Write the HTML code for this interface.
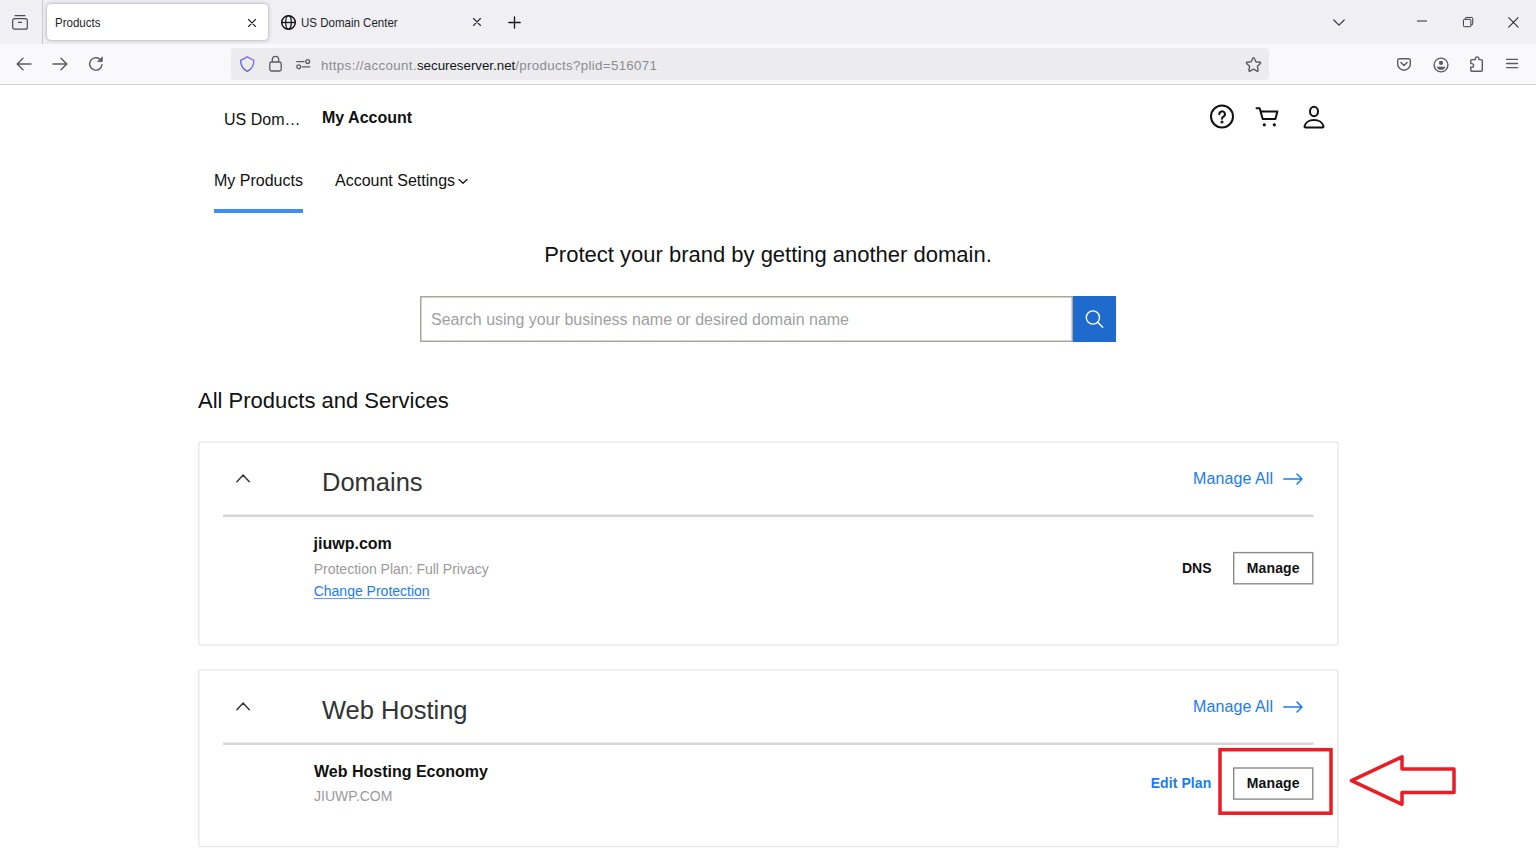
<!DOCTYPE html>
<html lang="en">
<head>
<meta charset="utf-8">
<title>Products</title>
<style>
*{box-sizing:border-box;margin:0;padding:0}
html,body{width:1536px;height:864px;overflow:hidden;background:#fff}
body{position:relative;font-family:"Liberation Sans",Arial,sans-serif;color:#111}
.abs{position:absolute}
.t{position:absolute;white-space:nowrap;line-height:1}
/* browser chrome */
#tabbar{left:0;top:0;width:1536px;height:44px;background:#f0f0f4}
#navbar{left:0;top:44px;width:1536px;height:41px;background:#f9f9fb;border-bottom:1px solid #cfcfd4}
#tab1{left:47px;top:4px;width:221px;height:36px;background:#fff;border-radius:4px;box-shadow:0 0 4px rgba(0,0,0,.28),0 0 1px rgba(0,0,0,.25)}
#sep{left:42px;top:0;width:1px;height:44px;background:#c9c9cf}
#urlbar{left:231px;top:48px;width:1038px;height:32px;background:#ececee;border-radius:4px}
.chrome{font-family:"Liberation Sans","DejaVu Sans",sans-serif;font-size:12.600px;color:#24232b;transform:scaleX(0.915);transform-origin:0 0}
svg{position:absolute;overflow:visible}
/* page */
.btn{position:absolute;width:80.500px;height:33px;font-weight:bold;font-size:14px;text-align:center;line-height:33px;color:#111;letter-spacing:0.120px}
.blue{color:#1a7cf5}
.gray{color:#767676}
</style>
</head>
<body>
<!-- ===== Browser chrome ===== -->
<div id="tabbar" class="abs"></div>
<div id="navbar" class="abs"></div>
<div id="sep" class="abs"></div>
<div id="tab1" class="abs"></div>
<div id="urlbar" class="abs"></div>

<!-- firefox view icon -->
<svg style="left:12px;top:14px" width="16" height="16" viewBox="0 0 16 16" fill="none" stroke="#4a4a55" stroke-width="1.2" stroke-linecap="round" stroke-linejoin="round">
<path d="M3 1.6h10"/><rect x="0.7" y="4.6" width="14.6" height="10.6" rx="2"/><path d="M6.4 8.4h3.2"/>
</svg>
<div class="t chrome" style="left:55px;top:17px">Products</div>
<svg style="left:247.500px;top:18.500px" width="8" height="8" viewBox="0 0 8 8" stroke="#2b2a33" stroke-width="1.100" stroke-linecap="round"><path d="M0.500 0.500l7 7M7.500 0.500l-7 7"/></svg>
<!-- globe -->
<svg style="left:281px;top:15.300px" width="15" height="15" viewBox="0 0 15 15" fill="none" stroke="#15141a" stroke-width="1.500"><circle cx="7.500" cy="7.500" r="6.800"/><ellipse cx="7.500" cy="7.500" rx="2.800" ry="6.800" stroke-width="1.300"/><path d="M0.800 7.500h13.400" stroke-width="1.300"/></svg>
<div class="t chrome" style="left:301px;top:17px">US Domain Center</div>
<svg style="left:473px;top:18px" width="8" height="8" viewBox="0 0 8 8" stroke="#2b2a33" stroke-width="1.100" stroke-linecap="round"><path d="M0.500 0.500l7 7M7.500 0.500l-7 7"/></svg>
<svg style="left:508px;top:16px" width="13" height="13" viewBox="0 0 13 13" stroke="#15141a" stroke-width="1.3" stroke-linecap="round"><path d="M6.5 0.8v11.4M0.8 6.5h11.4"/></svg>
<!-- window controls -->
<svg style="left:1333.400px;top:18.800px" width="12" height="8" viewBox="0 0 12 8" fill="none" stroke="#3a3944" stroke-width="1.200" stroke-linecap="round" stroke-linejoin="round"><path d="M0.8 1l5.2 5.2L11.2 1"/></svg>
<svg style="left:1417px;top:20.300px" width="10" height="2" viewBox="0 0 10 2" stroke="#2b2a33" stroke-width="1"><path d="M0 1h10"/></svg>
<svg style="left:1463px;top:16.800px" width="10.200" height="10.200" viewBox="0 0 11 11" fill="none" stroke="#2b2a33" stroke-width="1"><rect x="0.5" y="2.5" width="8" height="8" rx="1"/><path d="M2.5 2.5v-1a1 1 0 0 1 1-1h6a1 1 0 0 1 1 1v6a1 1 0 0 1-1 1h-1"/></svg>
<svg style="left:1507.600px;top:16.800px" width="10.800" height="10.800" viewBox="0 0 12 12" stroke="#2b2a33" stroke-width="1.200" stroke-linecap="round"><path d="M0.8 0.8l10.4 10.4M11.2 0.8L0.8 11.2"/></svg>

<!-- nav buttons -->
<svg style="left:16px;top:57px" width="16" height="14" viewBox="0 0 16 14" fill="none" stroke="#5b5b66" stroke-width="1.4" stroke-linecap="round" stroke-linejoin="round"><path d="M15 7H1.5M7 1.2L1.2 7 7 12.8"/></svg>
<svg style="left:52px;top:57px" width="16" height="14" viewBox="0 0 16 14" fill="none" stroke="#5b5b66" stroke-width="1.4" stroke-linecap="round" stroke-linejoin="round"><path d="M1 7h13.5M9 1.2L14.8 7 9 12.8"/></svg>
<svg style="left:88px;top:56px" width="16" height="16" viewBox="0 0 16 16" fill="none" stroke="#5b5b66" stroke-width="1.4" stroke-linecap="round" stroke-linejoin="round"><path d="M14 8.6A6.2 6.2 0 1 1 11.6 3"/><path d="M14.3 1.2v4.4H9.9z" fill="#5b5b66" stroke-width="0.8"/></svg>
<!-- url bar icons -->
<svg style="left:240px;top:56px" width="15" height="16" viewBox="0 0 15 16" fill="none" stroke-width="1.4" stroke-linejoin="round"><defs><linearGradient id="sg" x1="1" y1="0" x2="0" y2="1"><stop offset="0" stop-color="#a070fa"/><stop offset="1" stop-color="#2f62dc"/></linearGradient></defs><path d="M7.300 0.800L13.900 4.300C13.900 9.500 11.300 13.500 7.300 15.300C3.300 13.500 0.700 9.500 0.700 4.300Z" stroke="url(#sg)" stroke-linejoin="round"/></svg>
<svg style="left:269px;top:55px" width="13" height="17" viewBox="0 0 13 17" fill="none" stroke="#5b5b66" stroke-width="1.3" stroke-linejoin="round"><rect x="0.8" y="7" width="11.4" height="9" rx="1.8"/><path d="M3.300 7V4.500a3.200 3.200 0 0 1 6.400 0V7"/></svg>
<svg style="left:296px;top:58px" width="15" height="12" viewBox="0 0 15 12" fill="none" stroke="#5b5b66" stroke-width="1.3" stroke-linecap="round"><path d="M0.800 3.600h7.200"/><circle cx="11.700" cy="3.600" r="1.900"/><path d="M6.200 8.800h7.600"/><circle cx="2.700" cy="8.800" r="1.900"/></svg>
<div class="t" style="left:321px;top:59px;font-size:13.300px;color:#8b8b93;font-family:'Liberation Sans','DejaVu Sans',sans-serif"><span style="letter-spacing:0.360px">https://account.</span><span style="color:#15141a">secureserver.net</span><span style="letter-spacing:0.340px">/products?plid=516071</span></div>
<!-- star -->
<svg style="left:1245px;top:56.300px" width="17" height="16" viewBox="0 0 17 16" fill="none" stroke="#5b5b66" stroke-width="1.400" stroke-linejoin="round" stroke-linecap="round"><path d="M8.500 1.600c.3 0 .5.200.6.400l1.800 3.700 4.100.6c.6.100.8.700.4 1.100l-3 2.900.7 4.100c.1.600-.5 1-1 .7l-3.600-1.900-3.600 1.900c-.5.300-1.100-.1-1-.7l.7-4.100-3-2.900c-.4-.4-.2-1 .4-1.100l4.100-.6 1.800-3.700c.1-.2.300-.4.600-.4z"/></svg>
<!-- pocket -->
<svg style="left:1397px;top:57.600px" width="14" height="14" viewBox="0 0 14 14" fill="none" stroke="#5b5b66" stroke-width="1.400" stroke-linecap="round" stroke-linejoin="round"><path d="M2.400 0.700h9.200a1.700 1.700 0 0 1 1.700 1.700v3.500a6.300 6.300 0 0 1-12.600 0V2.400A1.700 1.700 0 0 1 2.400 0.700z"/><path d="M3.900 4.500l3.100 3 3.100-3"/></svg>
<!-- account -->
<svg style="left:1432.900px;top:56.900px" width="16" height="16" viewBox="0 0 16 16" fill="none" stroke="#5b5b66" stroke-width="1.400"><circle cx="8" cy="8" r="6.900"/><circle cx="8" cy="5.900" r="2.100" fill="#5b5b66" stroke="none"/><path d="M3.700 9.700h8.600c-.4 1.900-2.100 3.100-4.300 3.100s-3.900-1.200-4.300-3.100z" fill="#5b5b66" stroke="none"/></svg>
<!-- extensions -->
<svg style="left:1469.500px;top:56px" width="15" height="16" viewBox="0 0 15 16" fill="none" stroke="#5b5b66" stroke-width="1.400" stroke-linejoin="round"><path d="M5.300 3.600V2.700a1.800 1.800 0 0 1 3.600 0v.9h2.400a1 1 0 0 1 1 1v9.700a1 1 0 0 1-1 1H1.800a1 1 0 0 1-1-1v-3.100h1a1.800 1.800 0 0 0 0-3.600h-1V4.600a1 1 0 0 1 1-1z"/></svg>
<!-- hamburger -->
<svg style="left:1505px;top:57px" width="14" height="13" viewBox="0 0 14 13" stroke="#5b5b66" stroke-width="1.300" stroke-linecap="round"><path d="M1.600 2.400h11M1.600 6.500h11M1.600 10.600h11"/></svg>

<!-- ===== Page ===== -->
<div class="t" style="left:224px;top:111.500px;font-size:16px;color:#111">US Dom…</div>
<div class="t" style="left:322px;top:110px;font-size:16px;font-weight:bold;color:#111">My Account</div>

<!-- header icons -->
<svg style="left:1209px;top:104px" width="26" height="26" viewBox="0 0 26 26" fill="none" stroke="#111" stroke-width="2" stroke-linecap="round"><circle cx="13" cy="12.500" r="11"/><path d="M10.300 10.200a2.800 2.800 0 1 1 4.200 2.400c-.9.500-1.500 1-1.500 2.100"/><circle cx="13" cy="18" r="0.600" fill="#111"/></svg>
<svg style="left:1255px;top:106px" width="25" height="22" viewBox="0 0 25 22" fill="none" stroke="#111" stroke-width="2" stroke-linecap="round" stroke-linejoin="round"><path d="M1.500 2.200h3.200l.9 3.300M5.600 5.500h16.800l-2 7.600H7.700z"/><circle cx="9.300" cy="18.800" r="1" fill="#111" stroke-width="1.200"/><circle cx="19.300" cy="18.800" r="1" fill="#111" stroke-width="1.200"/></svg>
<svg style="left:1302px;top:105px" width="24" height="24" viewBox="0 0 24 24" fill="none" stroke="#111" stroke-width="2" stroke-linejoin="round"><ellipse cx="12" cy="6.500" rx="4" ry="4.800"/><path d="M3.600 22.500c-.8 0-1.300-.6-1.100-1.300.8-3.600 4.600-6.200 9.500-6.200s8.700 2.600 9.500 6.200c.2.700-.3 1.300-1.100 1.300z"/></svg>

<div class="t" style="left:214px;top:173px;font-size:16px;color:#111">My Products</div>
<div class="abs" style="left:214px;top:209px;width:89px;height:4px;background:#3d8ff7"></div>
<div class="t" style="left:335px;top:173px;font-size:16px;color:#111">Account Settings</div>
<svg style="left:458px;top:178px" width="10" height="7" viewBox="0 0 10 7" fill="none" stroke="#111" stroke-width="1.200" stroke-linecap="round" stroke-linejoin="round"><path d="M1 1.500l4 3.800 4-3.800"/></svg>

<div class="t" style="left:0;width:1536px;text-align:center;top:244px;font-size:22px;color:#111">Protect your brand by getting another domain.</div>

<svg style="left:0;top:0" width="1536" height="400" viewBox="0 0 1536 400"><rect x="420.750" y="296.750" width="651.500" height="44.500" fill="#fff" stroke="#aaa69b" stroke-width="1.500"/></svg>
<div class="t" style="left:431px;top:312px;font-size:16px;color:#a0a0a0">Search using your business name or desired domain name</div>
<div class="abs" style="left:1073px;top:296px;width:43px;height:46px;background:#1e6bcd"></div>
<svg style="left:1084px;top:309px" width="20" height="20" viewBox="0 0 20 20" fill="none" stroke="#fff" stroke-width="1.400" stroke-linecap="round"><circle cx="8.900" cy="8.500" r="6.600"/><path d="M13.700 13.300l5 5"/></svg>

<div class="t" style="left:198px;top:390px;font-size:22px;color:#111">All Products and Services</div>

<!-- Domains card -->
<svg style="left:0;top:0" width="1536" height="864" viewBox="0 0 1536 864" fill="none" stroke="#eaeaea" stroke-width="1.500"><rect x="198.800" y="442.100" width="1139.100" height="202.800" rx="1.200"/><rect x="198.800" y="670.100" width="1139.100" height="176.300" rx="1.200"/><rect x="223" y="514.500" width="1090.500" height="2.500" fill="#d6d6d6" stroke="none"/><rect x="223" y="742.500" width="1090.500" height="2.500" fill="#d6d6d6" stroke="none"/><rect x="1233.700" y="552.600" width="79.100" height="31.200" fill="#fff" stroke="#8a8a8a" stroke-width="1.400"/><rect x="1233.700" y="768" width="79.100" height="31.100" fill="#fff" stroke="#8a8a8a" stroke-width="1.400"/></svg>
<svg style="left:236px;top:474px" width="14" height="9" viewBox="0 0 14 9" fill="none" stroke="#333" stroke-width="1.400" stroke-linecap="round" stroke-linejoin="round"><path d="M0.900 7.800l6.200-6.800 6.200 6.800"/></svg>
<div class="t" style="left:322px;top:470px;font-size:25.500px;color:#333">Domains</div>
<div class="t blue" style="left:1193px;top:471px;font-size:16px;letter-spacing:0.1px">Manage All</div>
<svg style="left:1282.500px;top:472.600px" width="21" height="12" viewBox="0 0 21 12" fill="none" stroke="#1a7cf5" stroke-width="1.500" stroke-linecap="round" stroke-linejoin="round"><path d="M0.800 6h18.200M14 1l5 5-5 5"/></svg>
<div class="t" style="left:313.600px;top:536px;font-size:16px;font-weight:bold;color:#111">jiuwp.com</div>
<div class="t gray" style="left:313.700px;top:562px;font-size:14px;color:#9a9a9a">Protection Plan: Full Privacy</div>
<div class="t blue" style="left:313.700px;top:584px;font-size:14px;text-decoration:underline;text-decoration-thickness:1.300px;text-underline-offset:1.600px;text-decoration-color:#5a9ff8;text-decoration-skip-ink:auto">Change Protection</div>
<div class="t" style="left:1182px;top:561px;font-size:14px;font-weight:bold;color:#111">DNS</div>
<div class="btn" style="left:1233px;top:552px">Manage</div>

<!-- Web Hosting card -->
<svg style="left:236px;top:702px" width="14" height="9" viewBox="0 0 14 9" fill="none" stroke="#333" stroke-width="1.400" stroke-linecap="round" stroke-linejoin="round"><path d="M0.900 7.800l6.200-6.800 6.200 6.800"/></svg>
<div class="t" style="left:322px;top:698px;font-size:25.500px;color:#333">Web Hosting</div>
<div class="t blue" style="left:1193px;top:699px;font-size:16px;letter-spacing:0.1px">Manage All</div>
<svg style="left:1282.500px;top:700.600px" width="21" height="12" viewBox="0 0 21 12" fill="none" stroke="#1a7cf5" stroke-width="1.500" stroke-linecap="round" stroke-linejoin="round"><path d="M0.800 6h18.200M14 1l5 5-5 5"/></svg>
<div class="t" style="left:314px;top:764px;font-size:16px;font-weight:bold;color:#111">Web Hosting Economy</div>
<div class="t gray" style="left:314px;top:789px;font-size:14px;color:#9a9a9a">JIUWP.COM</div>
<div class="t blue" style="left:1150.700px;top:776px;font-size:14px;font-weight:bold;letter-spacing:0.080px">Edit Plan</div>
<div class="btn" style="left:1233px;top:767px">Manage</div>

<!-- annotations -->
<svg style="left:0;top:0" width="1536" height="864" viewBox="0 0 1536 864" fill="none" stroke="#ea1c24" stroke-width="3.500" stroke-linejoin="round">
<rect x="1220" y="749.700" width="111" height="63.500" stroke-linejoin="miter"/>
<path d="M1351.500 780.700L1402 756.800V769h52v23.500h-52V804.300z"/>
</svg>
</body>
</html>
